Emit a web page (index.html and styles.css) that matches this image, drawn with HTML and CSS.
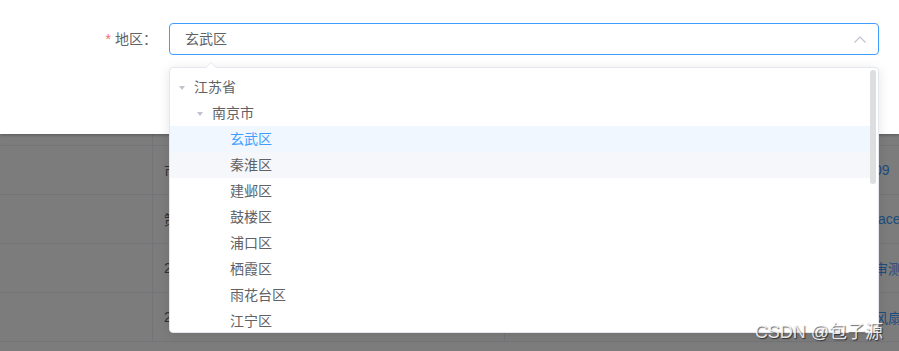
FILE: index.html
```html
<!DOCTYPE html>
<html>
<head>
    <title>地区选择</title>
    <link rel="stylesheet" href="styles.css">
</head>
<body>
    <div class="page">
        <div class="table">
            <div class="tr head">
                <div class="td col-1">名称</div>
                <div class="td col-2">部门</div>
                <div class="td col-3">创建时间</div>
                <div class="td col-4">操作</div>
            </div>
            <div class="tr">
                <div class="td col-1"></div>
                <div class="td col-2">市场部</div>
                <div class="td col-3"></div>
                <div class="td col-4"><span class="link">2021-07-09</span></div>
            </div>
            <div class="tr">
                <div class="td col-1"></div>
                <div class="td col-2">策略组</div>
                <div class="td col-3"></div>
                <div class="td col-4"><span class="link">ai-workspaces</span></div>
            </div>
            <div class="tr">
                <div class="td col-1"></div>
                <div class="td col-2">2021-06-18</div>
                <div class="td col-3"></div>
                <div class="td col-4"><span class="link">安全事件审测</span></div>
            </div>
            <div class="tr">
                <div class="td col-1"></div>
                <div class="td col-2">2021-06-02</div>
                <div class="td col-3"></div>
                <div class="td col-4"><span class="link">机房空调风扇</span></div>
            </div>
        </div>

        <div class="mask"></div>

        <div class="dialog">
            <div class="form-item">
                <label class="form-label"><span class="required">*</span>地区：</label>
                <div class="select is-focus">
                    <span class="select-value">玄武区</span>
                    <svg class="select-arrow" width="12" height="7" viewBox="0 0 12 7">
                        <polyline points="0.5,6.5 6,1 11.5,6.5" fill="none" stroke="#c0c4cc" stroke-width="1.2"/>
                    </svg>
                </div>
            </div>
        </div>

        <div class="dropdown">
            <div class="dropdown-arrow"></div>
            <ul class="tree">
                <li class="tree-node level-1"><span class="caret"></span><span class="node-label">江苏省</span></li>
                <li class="tree-node level-2"><span class="caret"></span><span class="node-label">南京市</span></li>
                <li class="tree-node level-3 is-current"><span class="caret leaf"></span><span class="node-label">玄武区</span></li>
                <li class="tree-node level-3 is-hover"><span class="caret leaf"></span><span class="node-label">秦淮区</span></li>
                <li class="tree-node level-3"><span class="caret leaf"></span><span class="node-label">建邺区</span></li>
                <li class="tree-node level-3"><span class="caret leaf"></span><span class="node-label">鼓楼区</span></li>
                <li class="tree-node level-3"><span class="caret leaf"></span><span class="node-label">浦口区</span></li>
                <li class="tree-node level-3"><span class="caret leaf"></span><span class="node-label">栖霞区</span></li>
                <li class="tree-node level-3"><span class="caret leaf"></span><span class="node-label">雨花台区</span></li>
                <li class="tree-node level-3"><span class="caret leaf"></span><span class="node-label">江宁区</span></li>
                <li class="tree-node level-3"><span class="caret leaf"></span><span class="node-label">六合区</span></li>
            </ul>
            <div class="scrollbar-thumb"></div>
        </div>

        <div class="watermark">CSDN @包子源</div>
    </div>
</body>
</html>
```

FILE: styles.css
```css
* {
    margin: 0;
    padding: 0;
    box-sizing: border-box;
}

body {
    font-family: "Liberation Sans", "Noto Sans CJK SC", sans-serif;
    font-size: 14px;
    color: #606266;
    background: #fff;
}

.page {
    position: relative;
    width: 899px;
    height: 351px;
    overflow: hidden;
}

/* background table */
.table {
    margin-top: 97px;
}

.tr {
    display: flex;
    height: 49px;
    border-bottom: 1px solid #ebeef5;
}

.td {
    display: flex;
    align-items: center;
    padding: 0 11px;
    white-space: nowrap;
    overflow: hidden;
    color: #606266;
}

.col-1 {
    width: 153px;
    border-right: 1px solid #ebeef5;
}

.col-2 {
    width: 352px;
    border-right: 1px solid #ebeef5;
}

.col-3 {
    width: 302px;
}

.col-4 {
    flex: 1;
}

.link {
    color: #409eff;
}

.mask {
    position: absolute;
    inset: 0;
    background: rgba(0, 0, 0, 0.515);
}

/* dialog */
.dialog {
    position: absolute;
    top: 0;
    left: 0;
    width: 899px;
    height: 134px;
    background: #fff;
    box-shadow: 0 1px 3px rgba(0, 0, 0, 0.3);
    padding-top: 23px;
}

.form-item {
    display: flex;
    align-items: center;
}

.form-label {
    width: 169px;
    padding-right: 12px;
    text-align: right;
    line-height: 32px;
    color: #606266;
}

.required {
    color: #f56c6c;
    margin-right: 4px;
}

.select {
    position: relative;
    display: flex;
    align-items: center;
    width: 710px;
    height: 32px;
    padding: 0 15px;
    border: 1px solid #dcdfe6;
    border-radius: 4px;
}

.select.is-focus {
    border-color: #409eff;
}

.select-value {
    flex: 1;
    color: #606266;
    line-height: 30px;
}

.select-arrow {
    margin-right: -3px;
}

/* dropdown */
.dropdown {
    position: absolute;
    top: 67px;
    left: 169px;
    width: 710px;
    height: 266px;
    background: #fff;
    border: 1px solid #e4e7ed;
    border-radius: 4px;
    box-shadow: 0 2px 12px rgba(0, 0, 0, 0.1);
}

.dropdown-arrow {
    position: absolute;
    top: -6px;
    left: 35px;
    width: 0;
    height: 0;
    border-left: 6px solid transparent;
    border-right: 6px solid transparent;
    border-bottom: 6px solid #e4e7ed;
}

.dropdown-arrow::after {
    content: "";
    position: absolute;
    top: 1px;
    left: -6px;
    border-left: 6px solid transparent;
    border-right: 6px solid transparent;
    border-bottom: 6px solid #fff;
}

.tree {
    list-style: none;
    padding-top: 6px;
    margin-right: 8px;
    height: 100%;
    overflow: hidden;
}

.tree-node {
    display: flex;
    align-items: center;
    height: 26px;
    line-height: 26px;
    white-space: nowrap;
}

.level-2 {
    padding-left: 18px;
}

.level-3 {
    padding-left: 36px;
}

.caret {
    position: relative;
    width: 24px;
    height: 26px;
}

.caret::before {
    content: "";
    position: absolute;
    left: 9px;
    top: 12px;
    border-left: 3.5px solid transparent;
    border-right: 3.5px solid transparent;
    border-top: 4px solid #c0c4cc;
}

.caret.leaf::before {
    display: none;
}

.is-current {
    background: #f0f7ff;
}

.is-current .node-label {
    color: #409eff;
}

.is-hover {
    background: #f5f7fa;
}

.scrollbar-thumb {
    position: absolute;
    top: 2px;
    right: 2px;
    width: 6px;
    height: 114px;
    border-radius: 3px;
    background: rgba(144, 147, 153, 0.3);
}

.watermark {
    position: absolute;
    right: 16px;
    top: 321px;
    font-size: 18px;
    line-height: 22px;
    color: rgba(255, 255, 255, 0.85);
    text-shadow: 1px 1px 1px rgba(0, 0, 0, 0.6);
    white-space: nowrap;
}
```
